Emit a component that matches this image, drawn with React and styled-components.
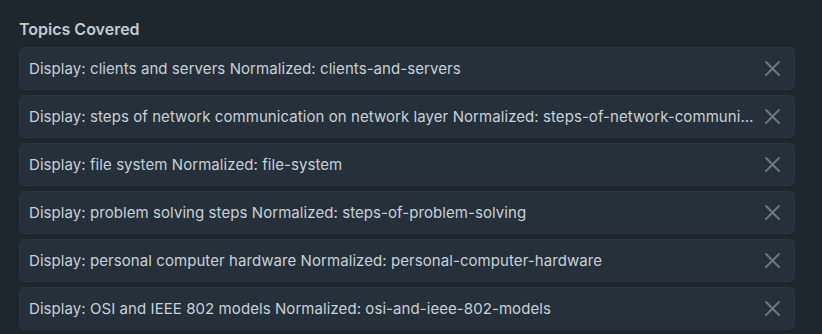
import React from 'react';
import styled, { createGlobalStyle } from 'styled-components';

const GlobalStyle = createGlobalStyle`
  html, body {
    margin: 0;
    padding: 0;
    background: #1f272e;
  }
  body {
    font-family: Inter, "Noto Sans", sans-serif;
  }
`;

const Section = styled.section`
  padding: 19px 27px 0 19px;
  display: flex;
  flex-direction: column;
`;

const Title = styled.h3`
  margin: 0 0 8px;
  font-size: 16px;
  font-weight: 600;
  line-height: 20px;
  color: #c3cad1;
`;

const List = styled.ul`
  list-style: none;
  margin: 0;
  padding: 0;
  display: flex;
  flex-direction: column;
  gap: 5px;
`;

const Item = styled.li`
  display: flex;
  align-items: center;
  gap: 11px;
  height: 43px;
  box-sizing: border-box;
  padding: 0 14px 0 9px;
  background: #25303a;
  border: 1px solid #2a353f;
  border-radius: 6px;
`;

const Label = styled.span`
  flex: 1;
  min-width: 0;
  font-size: 15px;
  letter-spacing: 0.07px;
  line-height: 20px;
  color: #c8d0d7;
  white-space: nowrap;
  overflow: hidden;
  text-overflow: ellipsis;
`;

const RemoveButton = styled.button`
  flex: none;
  width: 15px;
  height: 18px;
  padding: 0;
  border: none;
  background: none;
  display: flex;
  align-items: center;
  justify-content: center;
  color: #6c7882;
  cursor: pointer;
`;

const topics = [
  ['clients and servers', 'clients-and-servers'],
  ['steps of network communication on network layer', 'steps-of-network-communication-on-network-layer'],
  ['file system', 'file-system'],
  ['problem solving steps', 'steps-of-problem-solving'],
  ['personal computer hardware', 'personal-computer-hardware'],
  ['OSI and IEEE 802 models', 'osi-and-ieee-802-models'],
];

const CloseIcon = () => (
  <svg width="15" height="15" viewBox="0 0 15 15" fill="none">
    <path d="M1 1L14 14M14 1L1 14" stroke="currentColor" strokeWidth="1.9" strokeLinecap="round" />
  </svg>
);

export default function App() {
  return (
    <>
      <GlobalStyle />
      <Section>
        <Title>Topics Covered</Title>
        <List>
          {topics.map(([display, normalized]) => (
            <Item key={normalized}>
              <Label>
                Display: {display} Normalized: {normalized}
              </Label>
              <RemoveButton aria-label="Remove topic">
                <CloseIcon />
              </RemoveButton>
            </Item>
          ))}
        </List>
      </Section>
    </>
  );
}
